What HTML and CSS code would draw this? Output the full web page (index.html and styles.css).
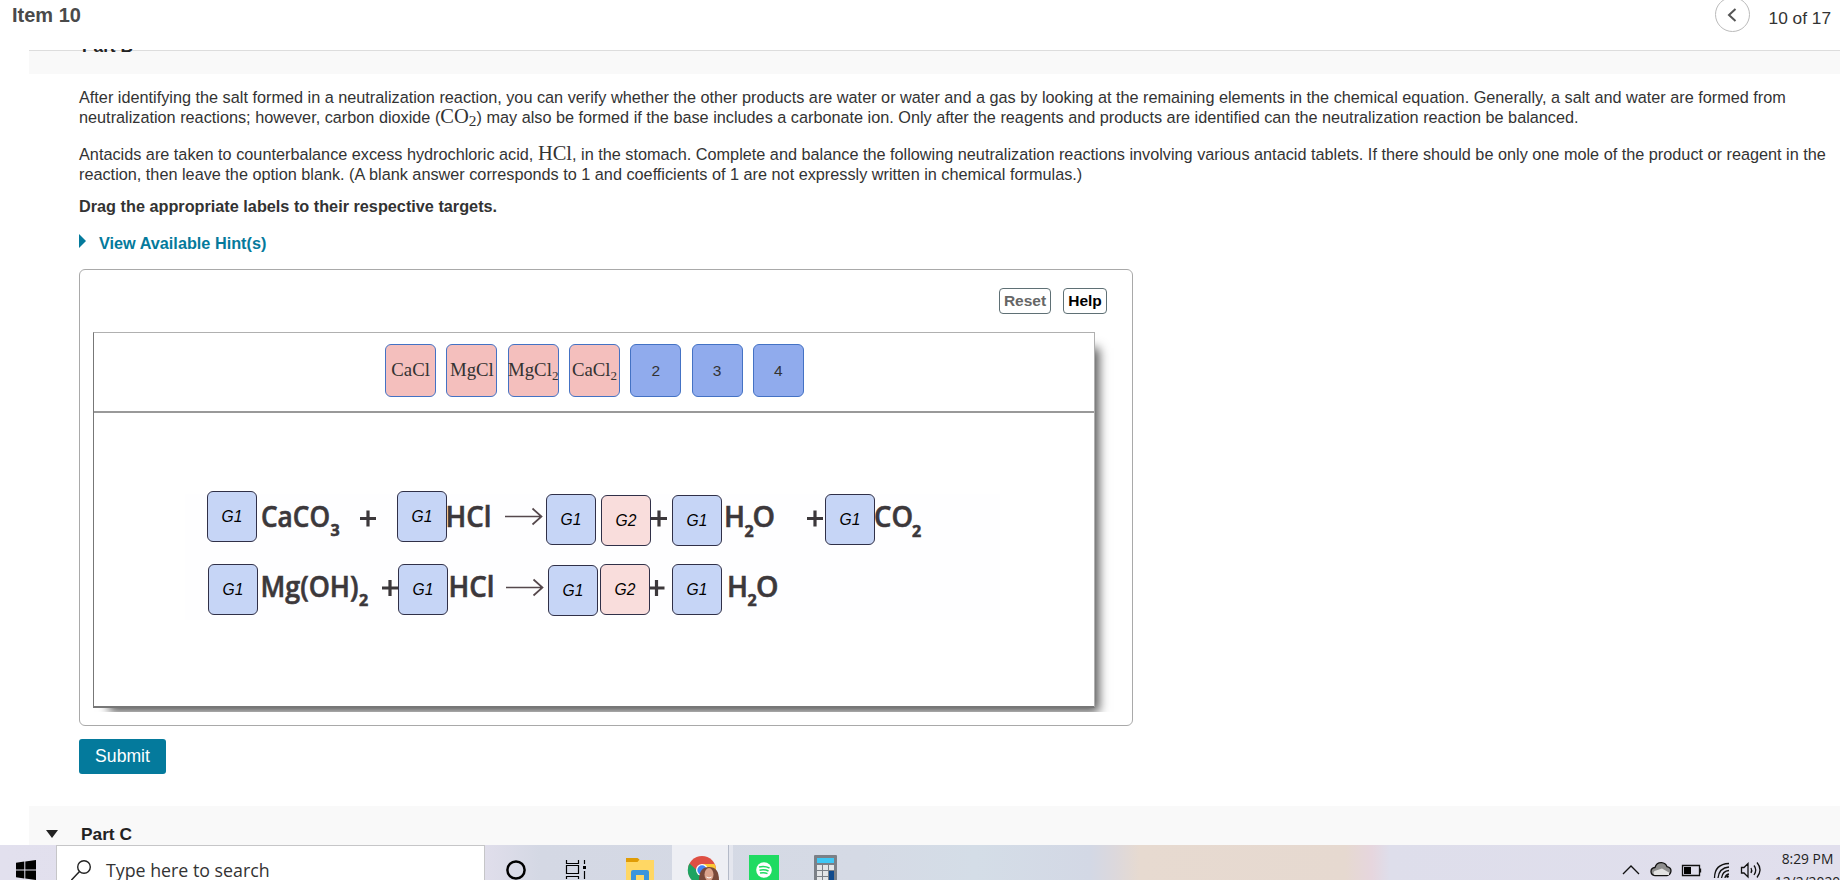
FILE: index.html
```html
<!DOCTYPE html>
<html lang="en">
<head>
    <meta charset="UTF-8">
    <meta name="viewport" content="width=device-width, initial-scale=1.0">
    <title>Item 10</title>
    <link rel="stylesheet" href="styles.css">
</head>
<body>
    <header class="item-header">
        <h1>Item 10</h1>
        <div class="item-nav">
            <button class="prev-btn" aria-label="Previous item">
                <svg width="10" height="14" viewBox="0 0 10 14"><path d="M8.500 1L2 7l6.500 6" fill="none" stroke="#555" stroke-width="2"/></svg>
            </button>
            <span>10 of 17</span>
        </div>
    </header>

    <main>
        <div class="part-bar part-b"><div class="part-clip"><h2>Part B</h2></div></div>

        <section class="question">
            <p>After identifying the salt formed in a neutralization reaction, you can verify whether the other products are water or water and a gas by looking at the remaining elements in the chemical equation. Generally, a salt and water are formed from<br>neutralization reactions; however, carbon dioxide (<span class="math">CO<sub>2</sub></span>) may also be formed if the base includes a carbonate ion. Only after the reagents and products are identified can the neutralization reaction be balanced.</p>
            <p>Antacids are taken to counterbalance excess hydrochloric acid, <span class="math">HCl</span>, in the stomach. Complete and balance the following neutralization reactions involving various antacid tablets. If there should be only one mole of the product or reagent in the<br>reaction, then leave the option blank. (A blank answer corresponds to 1 and coefficients of 1 are not expressly written in chemical formulas.)</p>
            <p class="instruction">Drag the appropriate labels to their respective targets.</p>
            <a class="hints"><span class="hint-arrow"></span>View Available Hint(s)</a>

            <div class="activity">
                <div class="toolbar">
                    <button class="tool-btn reset">Reset</button>
                    <button class="tool-btn">Help</button>
                </div>
                <div class="frame-wrap">
                    <div class="frame">
                        <div class="labels">
                            <div class="label salt">CaCl</div>
                            <div class="label salt">MgCl</div>
                            <div class="label salt">MgCl<sub>2</sub></div>
                            <div class="label salt">CaCl<sub>2</sub></div>
                            <div class="label number">2</div>
                            <div class="label number">3</div>
                            <div class="label number">4</div>
                        </div>
                        <div class="canvas">
                            <!-- equations, drop targets sit on top -->
                            <svg class="equations" width="1000" height="294" viewBox="94 413 1000 294">
                                <rect x="185" y="494" width="815" height="126" fill="#fefeff"/>
                                <g class="formula">
                                    <text x="261" y="527" textLength="69" lengthAdjust="spacingAndGlyphs">CaCO</text>
                                    <text class="sub" x="330.500" y="536">3</text>
                                    <text x="445.500" y="527" textLength="46" lengthAdjust="spacingAndGlyphs">HCl</text>
                                    <text x="724" y="527" textLength="21" lengthAdjust="spacingAndGlyphs">H</text>
                                    <text class="sub" x="744.500" y="536.500">2</text>
                                    <text x="752.500" y="527" textLength="22.500" lengthAdjust="spacingAndGlyphs">O</text>
                                    <text x="874" y="527" textLength="39" lengthAdjust="spacingAndGlyphs">CO</text>
                                    <text class="sub" x="912" y="536.500">2</text>

                                    <text x="260.500" y="596.500" textLength="98" lengthAdjust="spacingAndGlyphs">Mg(OH)</text>
                                    <text class="sub" x="359" y="606">2</text>
                                    <text x="448.500" y="596.500" textLength="46" lengthAdjust="spacingAndGlyphs">HCl</text>
                                    <text x="727" y="596.500" textLength="21" lengthAdjust="spacingAndGlyphs">H</text>
                                    <text class="sub" x="747.500" y="606">2</text>
                                    <text x="756" y="596.500" textLength="22.500" lengthAdjust="spacingAndGlyphs">O</text>
                                </g>
                                <g stroke="#3c383b" stroke-width="3.200">
                                    <path d="M360 518.500h16M368 510.500v16M651 518.500h16M659 510.500v16M807 518.500h16M815 510.500v16"/>
                                    <path d="M382 588h16M390 580v16M648.500 588h16M656.500 580v16"/>
                                </g>
                                <g stroke="#55484c" stroke-width="1.700" fill="none">
                                    <path d="M505 516.500h36M532.500 508.500l9 8l-9 8"/>
                                    <path d="M506 587.500h36M533.500 579.500l9 8l-9 8"/>
                                </g>
                            </svg>
                            <div class="target g1 r1a">G1</div>
                            <div class="target g1 r1b">G1</div>
                            <div class="target g1 r1c">G1</div>
                            <div class="target g2 r1d">G2</div>
                            <div class="target g1 r1e">G1</div>
                            <div class="target g1 r1f">G1</div>
                            <div class="target g1 r2a">G1</div>
                            <div class="target g1 r2b">G1</div>
                            <div class="target g1 r2c">G1</div>
                            <div class="target g2 r2d">G2</div>
                            <div class="target g1 r2e">G1</div>
                        </div>
                    </div>
                </div>
            </div>
            <button class="submit-btn">Submit</button>
        </section>

        <div class="part-bar part-c">
            <span class="caret"></span>
            <h2>Part C</h2>
        </div>
    </main>

    <footer class="taskbar">
        <div class="start">
            <svg width="20" height="20" viewBox="0 0 20 20"><path d="M0 2.800L8.300 1.600V9.500H0zM9.300 1.500L20 0v9.500H9.300zM0 10.500h8.300v8L0 17.300zM9.300 10.500H20V20L9.300 18.600z"/></svg>
        </div>
        <div class="search">
            <svg width="20" height="22" viewBox="0 0 20 22"><circle cx="13" cy="7" r="6.300" fill="none" stroke="#222" stroke-width="1.400"/><path d="M8.500 11.500L0 20.500" stroke="#222" stroke-width="1.500"/></svg>
            <span>Type here to search</span>
        </div>
        <div class="app">
            <svg width="62" height="35" viewBox="485 845 62 35"><circle cx="516" cy="870" r="8.600" fill="none" stroke="#000" stroke-width="2.500"/></svg>
        </div>
        <div class="app">
            <svg width="62" height="35" viewBox="547 845 62 35"><path d="M566.500 860v3.500h12V860M566.500 879v-2.500h12v2.500M566.500 865.500h12v8h-12zM584.500 860v4M584.500 871v8" fill="none" stroke="#000" stroke-width="1.200"/><path d="M583 866h3v3h-3z"/></svg>
        </div>
        <div class="app">
            <svg width="63" height="35" viewBox="609 845 63 35"><path d="M626 860h28v20h-28z" fill="#ffd764"/><path d="M626 858h11.500l2 1.500l-2 2.500H626z" fill="#e09c05"/><path d="M631 880v-8q0-2 2-2h14q2 0 2 2v8h-5v-5h-8v5z" fill="#3b95dc"/></svg>
        </div>
        <div class="app active">
            <svg width="56" height="35" viewBox="672 845 56 35">
                <circle cx="702" cy="870" r="14" fill="#de4f43"/>
                <path d="M689.500 863.500a14 14 0 0 0 8 20l5-8z" fill="#1da462"/>
                <path d="M702 864h12.500q2 4 1.500 8h-12z" fill="#fcc934"/>
                <circle cx="702" cy="870" r="6" fill="#fff"/>
                <circle cx="702" cy="870" r="4.700" fill="#4285f4"/>
                <path d="M699 880q0-13 10-13q10 0 10 13z" fill="#79493a"/>
                <ellipse cx="709" cy="874.500" rx="4.500" ry="6.500" fill="#dba38c"/>
                <path d="M706.500 877q2.500 2 5 0" stroke="#fff" fill="none"/>
            </svg>
        </div>
        <div class="edge"></div>
        <div class="app">
            <svg width="62" height="35" viewBox="733 845 62 35"><path d="M749 855h30v25h-30z" fill="#1fdb62"/><circle cx="764" cy="870" r="7.800" fill="#fff"/><path d="M759 867q5.500-1.500 10.500 1M759.500 870.200q5-1.200 9 .800M760 873q4.500-1 7.500.700" fill="none" stroke="#1fdb62" stroke-width="1.500"/></svg>
        </div>
        <div class="app">
            <svg width="62" height="35" viewBox="795 845 62 35"><path d="M814 856q0-1 1-1h21q1 0 1 1v24h-23z" fill="#7b8087"/><path d="M817 858h17v5h-17z" fill="#3fc8f5"/><path d="M817 865h5v5h-5zM823 865h5v5h-5zM829 865h5v5h-5zM817 871h5v5h-5zM823 871h5v5h-5zM817 877h5v3h-5zM823 877h5v3h-5z" fill="#e4e6e8"/><path d="M829 871h5v9h-5z" fill="#104a8c"/></svg>
        </div>
        <div class="tray">
            <svg width="150" height="35" viewBox="1620 845 150 35" fill="none" stroke="#111" stroke-width="1.300">
                <path d="M1623 874l8-8l8 8"/>
                <path d="M1655 875.500q-4-.500-4-4q0-3.500 4-4q1.500-5 6.500-4.800q4 .300 5.500 4q4 .800 4 4.300q-.500 4-4 4.500z" fill="#8d8d8d"/>
                <path d="M1654.500 875q-2-2 0-4l7.500-2.500l7 4v2.500z" fill="#e2e2e2" stroke="none"/>
                <path d="M1682.500 865.500h17v10h-17zM1700.500 868.500v4"/>
                <path d="M1684 867h7v7h-7z" fill="#000" stroke="none"/>
                <path d="M1714.500 878q0-14 14.500-14.500M1718 878q1-10 11-11M1721.500 878q1-7 7.500-7.500M1725 878q.500-3.500 4-4"/>
                <circle cx="1727.500" cy="876.500" r="1.300" fill="#000" stroke="none"/>
                <path d="M1741.500 867.500h2.500l4-4v13.500l-4-4h-2.500zM1751 868q1.500 2.500 0 5M1754 865.500q3.500 4.500 0 9.500M1757 862.500q6 7 0 15"/>
            </svg>
            <div class="clock"><span>8:29 PM</span><span>12/2/2020</span></div>
        </div>
    </footer>
</body>
</html>
```
FILE: styles.css
```css
* {
    box-sizing: border-box;
}
body {
    margin: 0;
    height: 880px;
    overflow: hidden;
    display: flex;
    flex-direction: column;
    background-color: #fff;
    color: #333;
    font-family: "Liberation Sans", Arial, sans-serif;
    font-size: 16px;
}
h1, h2, p {
    margin: 0;
}
button {
    font-family: inherit;
    padding: 0;
}

/* top bar */
.item-header {
    height: 49px;
    flex: none;
    display: flex;
    justify-content: space-between;
    padding: 0 9px 0 12px;
}
.item-header h1 {
    font-size: 20px;
    line-height: 30px;
    color: #4a4a4a;
}
.item-nav {
    display: flex;
    align-items: flex-start;
    gap: 19px;
    font-size: 17.300px;
    line-height: 36px;
}
.prev-btn {
    display: flex;
    align-items: center;
    justify-content: center;
    width: 35px;
    height: 35px;
    margin-top: -3px;
    border: 1px solid #bbb;
    border-radius: 50%;
    background-color: #fff;
}

/* part headings */
main {
    height: 796px;
    flex: none;
}
.part-bar {
    margin-left: 29px;
    background-color: #f9f9f9;
}
.part-bar h2 {
    font-size: 17.300px;
    color: #222;
}
.part-b {
    height: 25px;
    background-image: linear-gradient(#fff 1px, #ddd 1px, #ddd 2px, transparent 2px);
    box-shadow: -29px 0 0 #fff;
}
/* only the foot of the heading shows under the top bar */
.part-clip {
    height: 4px;
    overflow: hidden;
    padding-left: 53px;
    display: flex;
    align-items: flex-end;
}
.part-b h2 {
    line-height: 14px;
}
.part-c {
    height: 39px;
    margin-top: 32px;
    display: flex;
    padding-left: 17px;
    gap: 23px;
}
.part-c h2 {
    line-height: 57px;
}
.caret {
    margin-top: 24px;
    height: 0;
    border: 6.500px solid transparent;
    border-top: 8px solid #222;
    border-bottom: 0;
}

/* question text */
.question {
    padding: 13px 0 0 79px;
}
.question p {
    font-size: 16.250px;
    line-height: 20px;
    margin-bottom: 17px;
    white-space: nowrap;
}
.math {
    font-family: "Liberation Serif", serif;
    font-size: 20.500px;
    line-height: 1px;
}
sub {
    font-size: 75%;
    line-height: 0;
    vertical-align: -3px;
}
.question .instruction {
    font-weight: bold;
    margin: -5px 0 0;
}
.hints {
    display: flex;
    margin-top: 17px;
    height: 36px;
    font-size: 16.250px;
    line-height: 20px;
    color: #047a9c;
    font-weight: bold;
}
.hint-arrow {
    height: 0;
    margin: 1px 13px 0 0;
    border: 7px solid transparent;
    border-left: 7px solid #047a9c;
    border-right: 0;
}

/* activity */
.activity {
    width: 1054px;
    height: 457px;
    border: 1px solid #a9a9a9;
    border-radius: 6px;
}
.toolbar {
    display: flex;
    justify-content: flex-end;
    gap: 12px;
    padding: 18px 25px 18px 0;
}
.tool-btn {
    width: 44px;
    height: 26px;
    border: 1px solid #5f7075;
    border-radius: 4px;
    background-color: #fff;
    color: #000;
    font-size: 15.500px;
    font-weight: bold;
}
.reset {
    width: 52px;
    color: #666;
}
.frame-wrap {
    height: 380px;
    padding-left: 13px;
    overflow: hidden;
}
.frame {
    width: 1002px;
    height: 376px;
    border: 1px solid #b0b0b0;
    border-left-color: #777;
    border-bottom: 2px solid #777;
    background-color: #fff;
    box-shadow: 10px 10px 10px -6px #555;
}
.labels {
    display: flex;
    justify-content: center;
    gap: 10.300px;
    height: 80px;
    padding: 11px 0 0 1px;
    border-bottom: 2px solid #999;
}
.label {
    display: flex;
    align-items: center;
    justify-content: center;
    width: 51px;
    height: 53px;
    border: 1px solid #4472c4;
    border-radius: 6px;
}
.salt {
    padding-bottom: 2px;
    background-color: #f4bfbd;
    font-family: "Liberation Serif", serif;
    font-size: 18.800px;
}
.salt sub {
    align-self: flex-end;
    font-size: 13px;
    margin-bottom: 18px;
}
.number {
    background-color: #90abed;
    font-size: 15.500px;
}
.canvas {
    position: relative;
    height: 294px;
}
.equations {
    display: block;
}
.formula {
    font-family: "Open Sans", sans-serif;
    font-size: 29px;
    font-weight: 600;
    fill: #3c383b;
    stroke: #3c383b;
    stroke-width: 0.600px;
}
.formula .sub {
    font-size: 16px;
    font-weight: bold;
}
.target {
    position: absolute;
    width: 50px;
    height: 51px;
    line-height: 49px;
    text-align: center;
    border: 1px solid #303048;
    border-radius: 6px;
    color: #000;
    font-size: 15.600px;
    font-style: italic;
}
.g1 { background-color: #c6d5f6; }
.g2 { background-color: #f9dddc; }

.r1a { left: 113px; top: 78px; }
.r1b { left: 303px; top: 78px; }
.r1c { left: 452px; top: 81px; }
.r1d { left: 507px; top: 82px; }
.r1e { left: 578px; top: 82px; }
.r1f { left: 731px; top: 81px; }
.r2a { left: 114px; top: 151px; }
.r2b { left: 304px; top: 151px; }
.r2c { left: 454px; top: 152px; }
.r2d { left: 506px; top: 151px; }
.r2e { left: 578px; top: 151px; }

.submit-btn {
    display: block;
    width: 87px;
    height: 35px;
    margin-top: 13px;
    border: none;
    border-radius: 3px;
    background-color: #047a9c;
    color: #fff;
    font-size: 17.600px;
}

/* windows taskbar */
.taskbar {
    display: flex;
    height: 35px;
    flex: none;
    overflow: hidden;
    background: linear-gradient(90deg, #e2e0ee 0, #e0deeb 485px, #d4d8e4 540px, #d5dae5 860px, #d4dde7 975px, #d3d8e5 1090px, #dcd8dc 1115px, #e7dad0 1140px, #e6d9d0 1345px, #e6d6de 1372px, #dedeeb 1390px, #e1dfed 1840px);
}
.start {
    width: 56px;
    padding: 15px 0 0 16px;
}
.search {
    display: flex;
    width: 429px;
    gap: 15px;
    padding: 14px 0 0 14px;
    border: 1px solid #c6c6c8;
    border-bottom: 0;
    background-color: #fff;
    color: #333;
    font-family: "Open Sans", sans-serif;
    font-size: 17.800px;
    line-height: 21px;
}
.search svg, .app svg, .tray svg {
    display: block;
    flex: none;
}
.active {
    background-color: #eeeff4;
}
.edge {
    width: 5px;
    border-left: 1px solid #b4bac8;
    background-color: #e4e6ee;
}
.tray {
    display: flex;
    margin-left: auto;
}
.clock {
    width: 65px;
    display: flex;
    flex-direction: column;
    align-items: center;
    margin: 2px 0 0 5px;
    color: #222;
    font-family: "Open Sans", sans-serif;
    font-size: 13.800px;
    line-height: 23px;
}
```
